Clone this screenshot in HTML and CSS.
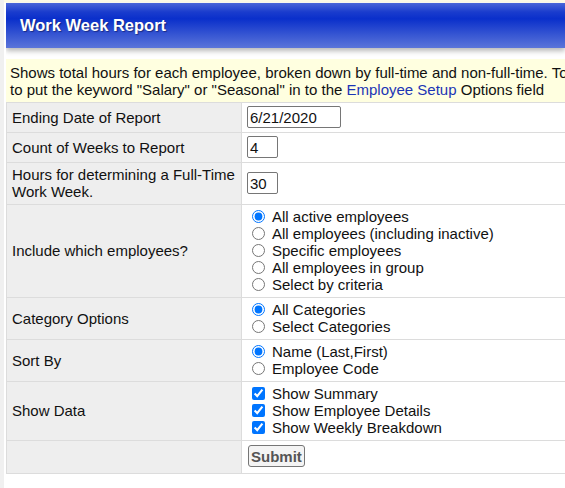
FILE: index.html
```
<!DOCTYPE html>
<html>
<head>
<meta charset="utf-8">
<title>Work Week Report</title>
<link rel="stylesheet" href="styles.css">
</head>
<body>
<div class="page">
  <div class="gutter"></div>
  <div class="main">
    <div class="header"><h1 class="title">Work Week Report</h1></div>
    <div class="intro">
      <div class="intro-line">Shows total hours for each employee, broken down by full-time and non-full-time. To</div>
      <div class="intro-line">to put the keyword "Salary" or "Seasonal" in to the <a class="link" href="#">Employee Setup</a> Options field</div>
    </div>
    <table class="form">
      <tr>
        <td class="label">Ending Date of Report</td>
        <td class="value"><input class="text date" type="text" value="6/21/2020"></td>
      </tr>
      <tr>
        <td class="label">Count of Weeks to Report</td>
        <td class="value"><input class="text short" type="text" value="4"></td>
      </tr>
      <tr>
        <td class="label">Hours for determining a Full-Time Work Week.</td>
        <td class="value"><input class="text short" type="text" value="30"></td>
      </tr>
      <tr>
        <td class="label">Include which employees?</td>
        <td class="value">
          <label class="opt"><input type="radio" name="emp" checked><span>All active employees</span></label>
          <label class="opt"><input type="radio" name="emp"><span>All employees (including inactive)</span></label>
          <label class="opt"><input type="radio" name="emp"><span>Specific employees</span></label>
          <label class="opt"><input type="radio" name="emp"><span>All employees in group</span></label>
          <label class="opt"><input type="radio" name="emp"><span>Select by criteria</span></label>
        </td>
      </tr>
      <tr>
        <td class="label">Category Options</td>
        <td class="value">
          <label class="opt"><input type="radio" name="cat" checked><span>All Categories</span></label>
          <label class="opt"><input type="radio" name="cat"><span>Select Categories</span></label>
        </td>
      </tr>
      <tr>
        <td class="label">Sort By</td>
        <td class="value">
          <label class="opt"><input type="radio" name="sort" checked><span>Name (Last,First)</span></label>
          <label class="opt"><input type="radio" name="sort"><span>Employee Code</span></label>
        </td>
      </tr>
      <tr>
        <td class="label">Show Data</td>
        <td class="value">
          <label class="opt"><input type="checkbox" checked><span>Show Summary</span></label>
          <label class="opt"><input type="checkbox" checked><span>Show Employee Details</span></label>
          <label class="opt"><input type="checkbox" checked><span>Show Weekly Breakdown</span></label>
        </td>
      </tr>
      <tr>
        <td class="label"></td>
        <td class="value"><button class="submit" type="button">Submit</button></td>
      </tr>
    </table>
  </div>
</div>
</body>
</html>
```
FILE: styles.css
```
html, body {
  margin: 0;
  padding: 0;
  overflow: hidden;
  background: #ffffff;
}
body {
  font-family: "Liberation Sans", Arial, sans-serif;
  font-size: 15px;
  color: #111;
}
.page {
  display: flex;
  min-height: 488px;
  background: linear-gradient(to bottom, #fdfbe6 0, #fdfbe6 2px, #ffffff 3px);
}
.gutter {
  width: 4px;
  flex: none;
  background: #f0f0f0;
}
.main {
  flex: 1;
  min-width: 0;
  margin-left: 2px;
  padding-top: 3px;
  overflow: hidden;
}
.header {
  height: 45px;
  display: flex;
  align-items: center;
  padding-left: 14px;
  background: linear-gradient(to bottom, #4a66d8 0%, #1a3ccd 20%, #0a2fcb 35%, #3050d1 65%, #5b75d9 100%);
  box-shadow: 0 3px 5px rgba(0, 0, 0, 0.28);
}
.title {
  margin: 0;
  font-size: 16.5px;
  font-weight: bold;
  color: #ffffff;
  text-shadow: 1px 1px 1px rgba(0, 0, 40, 0.45);
}
.intro {
  margin-top: 11px;
  background: #ffffe0;
  padding: 5px 4px 4px 4px;
  white-space: nowrap;
  line-height: 17px;
}
.link {
  color: #1c35b5;
  text-decoration: none;
}
.form {
  border-collapse: collapse;
  width: 660px;
}
.form td {
  border: 1px solid #dcdcdc;
  padding: 3px 5px 4px 5px;
  line-height: 17px;
  vertical-align: middle;
}
.form td.label {
  width: 224px;
  background: #eeeeee;
}
.form td.value {
  background: #ffffff;
  padding-left: 5px;
}
.text {
  box-sizing: border-box;
  height: 22px;
  font-family: "Liberation Sans", Arial, sans-serif;
  font-size: 15px;
  padding: 0 2px;
  border: 1px solid #767676;
  border-radius: 2px;
  margin: 0;
  display: block;
  color: #111;
}
.date { width: 94px; }
.short { width: 31px; }
.opt {
  display: flex;
  align-items: center;
  height: 17px;
}
.opt input {
  width: 13px;
  height: 13px;
  margin: 0 0 0 5px;
  flex: none;
}
.opt span {
  margin-left: 7px;
}
.submit {
  display: block;
  box-sizing: border-box;
  height: 22px;
  margin: 1px 0 2px 1px;
  padding: 0 2px;
  font-family: "Liberation Sans", Arial, sans-serif;
  font-size: 15px;
  font-weight: bold;
  color: #555;
  background: #f4f4f4;
  border: 1px solid #767676;
  border-radius: 3px;
}
```
